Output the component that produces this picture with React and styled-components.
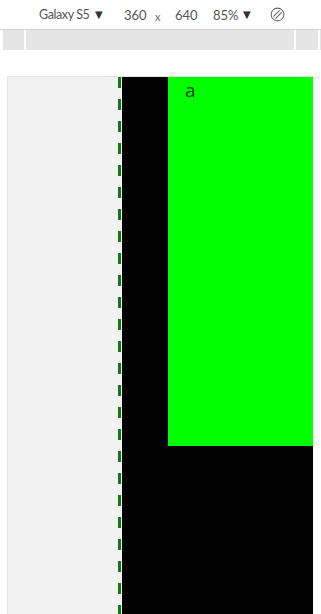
import React from "react";
import styled, { createGlobalStyle } from "styled-components";

const Global = createGlobalStyle`
  html, body { margin: 0; padding: 0; background: #ffffff; overflow: hidden; }
  body { font-family: "Open Sans", "Noto Sans", sans-serif; }
`;

const Page = styled.div`
  width: 321px;
  height: 614px;
  display: flex;
  flex-direction: column;
  background: #ffffff;
`;

const Toolbar = styled.div`
  height: 29px;
  border-bottom: 1px solid #d0d0d0;
  display: flex;
  align-items: center;
  padding-left: 39px;
  box-sizing: content-box;
  color: #555555;
  font-family: Lato, "Open Sans", sans-serif;
  font-size: 13px;
  white-space: nowrap;
`;

const Slot = styled.span`
  display: inline-flex;
  align-items: center;
  width: ${(p) => p.$w}px;
  flex: none;
  font-size: ${(p) => p.$fs || 13}px;
  letter-spacing: ${(p) => p.$ls || 0}px;
`;

const Caret = styled.span`
  font-family: "DejaVu Sans", sans-serif;
  font-size: 10px;
  color: #333;
`;

const Times = styled.span`
  font-size: 11px;
  color: #666;
  padding-top: 3px;
`;

const Ruler = styled.div`
  height: 20px;
  display: grid;
  grid-template-columns: 21px 268px 22px 1fr;
  column-gap: 2px;
  padding-left: 3px;
  background: #ffffff;
`;

const RulerCell = styled.div`
  background: #e5e5e5;
`;

const Spacer = styled.div`
  height: 26px;
`;

const Frame = styled.div`
  flex: 1;
  display: flex;
  margin-left: 7px;
  width: 306px;
  border-top: 1px solid #e2e2e2;
`;

const SidePanel = styled.div`
  width: 111px;
  background: #f2f2f2;
  border-left: 1px solid #e6e6e6;
  box-sizing: border-box;
`;

const DashedEdge = styled.div`
  width: 4px;
  background-color: #f2f2f2;
  background-image: linear-gradient(to bottom, #137a13 0, #137a13 50%, #f2f2f2 50%, #f2f2f2 100%);
  background-size: 3px 22px;
  background-repeat: repeat-y;
  background-position: 0 0;
`;

const Viewport = styled.div`
  flex: 1;
  background: #000000;
  display: flex;
  align-items: flex-start;
  padding-left: 46px;
`;

const GreenBox = styled.div`
  flex: 1;
  height: 369px;
  background: #00ff00;
  padding: 2px 0 0 17px;
  box-sizing: border-box;
  font-family: "Open Sans", "Noto Sans", sans-serif;
  font-size: 19px;
  line-height: 22px;
  color: #0b3d0b;
`;

const RotateIcon = () => (
  <svg width="15" height="15" viewBox="0 0 16 16" fill="none" stroke="#666" strokeWidth="1.1">
    <circle cx="8" cy="8" r="6.8" />
    <line x1="3.6" y1="10.2" x2="10.2" y2="3.6" />
    <line x1="5.8" y1="12.4" x2="12.4" y2="5.8" />
  </svg>
);

export default function App() {
  return (
    <>
      <Global />
      <Page>
        <Toolbar>
          <Slot $w={56} $fs={12.5} $ls={-0.4}>Galaxy S5</Slot>
          <Slot $w={29}>
            <Caret>▼</Caret>
          </Slot>
          <Slot $w={31}>360</Slot>
          <Slot $w={20}>
            <Times>x</Times>
          </Slot>
          <Slot $w={38}>640</Slot>
          <Slot $w={30}>85%</Slot>
          <Slot $w={27}>
            <Caret>▼</Caret>
          </Slot>
          <Slot $w={16}>
            <RotateIcon />
          </Slot>
        </Toolbar>
        <Ruler>
          <RulerCell />
          <RulerCell />
          <RulerCell />
          <RulerCell />
        </Ruler>
        <Spacer />
        <Frame>
          <SidePanel />
          <DashedEdge />
          <Viewport>
            <GreenBox>a</GreenBox>
          </Viewport>
        </Frame>
      </Page>
    </>
  );
}
